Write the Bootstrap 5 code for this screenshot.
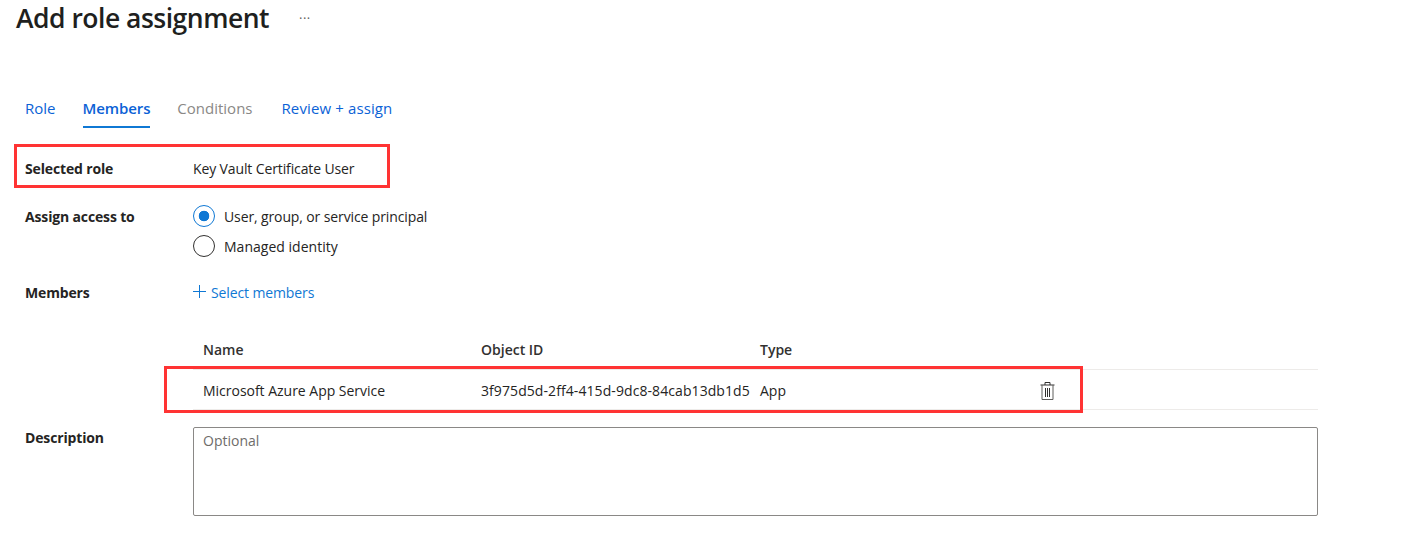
<!DOCTYPE html>
<html lang="en">
<head>
<meta charset="utf-8">
<title>Add role assignment</title>
<link rel="stylesheet" href="https://cdn.jsdelivr.net/npm/bootstrap@5.3.0/dist/css/bootstrap.min.css">
<style>
html,body{height:545px;overflow:hidden;background:#fff}
body{font-family:"Open Sans","Noto Sans",sans-serif;font-size:14px;color:#252423;letter-spacing:-.12px;position:relative}
.page-head{height:37px;padding-left:16px;gap:30px}
.page-title{font-size:26.5px;font-weight:600;line-height:37px;margin:0;color:#201f1e;letter-spacing:-.5px}
.more-dots{font-size:13px;line-height:37px;color:#605e5c;letter-spacing:.5px}
.wizard-tabs{margin-top:51px;padding-left:25px;gap:27px;height:40px}
.wizard-tab{display:block;height:40px;line-height:41px;color:#0b62d6;text-decoration:none;font-size:15px;letter-spacing:0}
.wizard-tab:last-child{margin-left:2px;letter-spacing:.12px}
.wizard-tab.is-active{font-weight:600;letter-spacing:-.1px;border-bottom:2px solid #0f78d4}
.wizard-tab.is-off{color:#8a8886}
.form-area{padding-left:25px;width:1318px}
.field-label{width:168px;flex:none;font-weight:700;color:#252423;letter-spacing:-.15px}
.row-role{margin-top:30px;height:22px;line-height:22px}
.row-access{margin-top:26px}
.radio-line{height:30px;gap:9px;margin-top:-5px}
.radio-alt{letter-spacing:.02px}
.radio-dot{width:22px;height:22px;flex:none;border-radius:50%;border:1.5px solid #323130;background:#fff}
.radio-dot.is-on{border-color:#0f78d4;background:radial-gradient(circle,#0f78d4 0 5px,#fff 5.6px)}
.row-members{margin-top:21px;line-height:22px;height:22px}
.add-link{color:#0f78d4;text-decoration:none;gap:5px}
.add-link svg{margin-top:-4px}
.member-table{margin:33px 0 0 168px}
.member-row{display:grid;grid-template-columns:278px 279px 270px 1fr;padding-left:10px}
.member-head{height:33px;line-height:26px;font-weight:600;color:#323130;border-bottom:1px solid #edebe9;letter-spacing:0}
.member-body{height:40px;line-height:42px;border-bottom:1px solid #edebe9;letter-spacing:-.02px}
.member-id{letter-spacing:.08px}
.member-bin{padding-left:10px;display:flex;align-items:center}
.row-desc{margin-top:17px}
.desc-box{flex:1;height:89px;border:1px solid #8a8886;border-radius:2px;padding:1px 9px;color:#6e6c6a;line-height:24px;letter-spacing:0}
.mark-box{position:absolute;border:3px solid #ff3333;pointer-events:none}
.mark-role{left:14px;top:144px;width:376px;height:44px}
.mark-member{left:164px;top:366px;width:919px;height:47px}
</style>
</head>
<body>
<header class="page-head d-flex align-items-center">
  <h1 class="page-title">Add role assignment</h1>
  <span class="more-dots">···</span>
</header>
<nav class="wizard-tabs d-flex">
  <a class="wizard-tab" href="#">Role</a>
  <a class="wizard-tab is-active" href="#">Members</a>
  <a class="wizard-tab is-off" href="#">Conditions</a>
  <a class="wizard-tab" href="#">Review + assign</a>
</nav>
<main class="form-area">
  <div class="row-role d-flex"><div class="field-label">Selected role</div><div>Key Vault Certificate User</div></div>
  <div class="row-access d-flex">
    <div class="field-label">Assign access to</div>
    <div>
      <div class="radio-line d-flex align-items-center"><span class="radio-dot is-on"></span><span>User, group, or service principal</span></div>
      <div class="radio-line d-flex align-items-center mt-0"><span class="radio-dot"></span><span class="radio-alt">Managed identity</span></div>
    </div>
  </div>
  <div class="row-members d-flex">
    <div class="field-label">Members</div>
    <a class="add-link d-flex align-items-center" href="#">
      <svg width="13" height="13" viewBox="0 0 13 13" aria-hidden="true"><path d="M6.5 0v13M0 6.5h13" stroke="#0f78d4" stroke-width="1" fill="none"/></svg>
      <span>Select members</span>
    </a>
  </div>
  <div class="member-table">
    <div class="member-row member-head"><div>Name</div><div>Object ID</div><div>Type</div><div></div></div>
    <div class="member-row member-body"><div>Microsoft Azure App Service</div><div class="member-id">3f975d5d-2ff4-415d-9dc8-84cab13db1d5</div><div>App</div>
      <div class="member-bin">
        <svg width="15" height="18" viewBox="0 0 15 18" fill="none" stroke="#323130" aria-hidden="true"><path d="M5 3V.5h5V3M.5 3h14"/><path d="M2 3v14.5h11V3" stroke="#5f5e5c"/><path d="M5.5 6v9M7.5 6v9M9.5 6v9"/></svg>
      </div>
    </div>
  </div>
  <div class="row-desc d-flex"><div class="field-label">Description</div><div class="desc-box">Optional</div></div>
</main>
<div class="mark-box mark-role"></div>
<div class="mark-box mark-member"></div>
</body>
</html>
